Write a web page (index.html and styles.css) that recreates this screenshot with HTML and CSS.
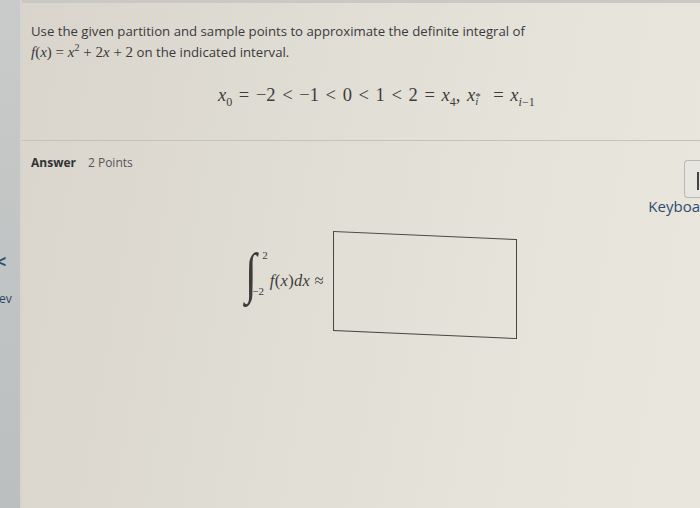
FILE: index.html
```html
<!DOCTYPE html>
<html>
<head>
<meta charset="utf-8">
<link rel="stylesheet" href="styles.css">
</head>
<body>
<div class="page">
  <aside class="sidebar">
    <span class="back">&lt;</span>
    <span class="prev">ev</span>
  </aside>
  <main class="main">
    <section class="question">
      <p class="prompt">Use the given partition and sample points to approximate the definite integral of<br><span class="math"><i>f</i>(<i>x</i>) = <i>x</i><sup>2</sup> + 2<i>x</i> + 2</span> on the indicated interval.</p>
      <p class="formula"><i>x</i><sub>0</sub> = −2 &lt; −1 &lt; 0 &lt; 1 &lt; 2 = <i>x</i><sub>4</sub>, <i>x</i><span class="supsub"><sup>*</sup><sub><i>i</i></sub></span> = <i>x</i><sub><i>i</i>−1</sub></p>
    </section>
    <section class="answer">
      <div class="answer-head">
        <span class="label">Answer</span>
        <span class="points">2 Points</span>
        <span class="tool-btn"><span class="bar"></span></span>
      </div>
      <div class="keyboard">Keyboa</div>
      <div class="work">
        <div class="integral">
          <span class="int-sign">∫</span>
          <span class="limits"><span class="upper">2</span><span class="lower">−2</span></span>
          <span class="integrand"><i>f</i>(<i>x</i>)<i>dx</i> ≈</span>
        </div>
        <div class="answer-box"></div>
      </div>
    </section>
  </main>
</div>
</body>
</html>
```

FILE: styles.css
```css
html, body {
  margin: 0;
  padding: 0;
}
body {
  width: 700px;
  height: 508px;
  overflow: hidden;
  font-family: "Open Sans", "Liberation Sans", sans-serif;
  background: #dcd9d2;
}
.page {
  display: flex;
  height: 508px;
}
.sidebar {
  width: 22px;
  flex: none;
  background: linear-gradient(180deg, #c9cbca 0%, #c0c3c3 60%, #bcbfbf 100%);
  border-right: 2px solid #d4d4d0;
  display: flex;
  flex-direction: column;
  color: #2c4662;
  font-size: 12px;
  padding-top: 252px;
  box-sizing: border-box;
  overflow: hidden;
}
.back {
  margin-left: -4px;
  font-size: 18px;
  font-weight: 700;
  line-height: 18px;
  color: #35506c;
}
.prev {
  margin-top: 22px;
  margin-left: -1px;
  line-height: 14px;
}
.main {
  flex: 1;
  border-top: 3px solid #c9c8c4;
  background: linear-gradient(100deg, #d9d5cd 0%, #e0ddd5 40%, #e6e3db 70%, #e9e6de 100%);
}
.question {
  padding: 18px 0 0 9px;
  height: 138px;
  box-sizing: border-box;
  border-bottom: 1px solid #c4c2bc;
}
.prompt {
  margin: 0;
  font-size: 13.2px;
  line-height: 21px;
  color: #3a3a3a;
}
.math {
  font-family: "Liberation Serif", serif;
  font-size: 15px;
}
.math sup {
  font-size: 10px;
  line-height: 0;
}
.formula {
  margin: 22px 0 0 187px;
  font-family: "Liberation Serif", serif;
  font-size: 18.5px;
  line-height: 20px;
  color: #3c3c3c;
  word-spacing: 2px;
}
.formula sub {
  font-size: 12px;
  line-height: 0;
}
.supsub {
  display: inline-flex;
  flex-direction: column;
  vertical-align: middle;
  font-size: 11px;
  line-height: 9px;
  margin-right: 6px;
}
.supsub sup, .supsub sub {
  vertical-align: baseline;
  font-size: 11px;
}
.answer {
  padding: 13px 0 0 9px;
}
.answer-head {
  display: flex;
  align-items: flex-start;
  gap: 12px;
  font-size: 12px;
  line-height: 18px;
}
.label {
  font-weight: 700;
  color: #333;
}
.points {
  color: #555;
}
.tool-btn {
  margin-left: auto;
  margin-top: 6px;
  width: 22px;
  height: 36px;
  border: 1px solid #b8b8b4;
  border-right: none;
  border-radius: 4px 0 0 4px;
  background: #e8e6e0;
  position: relative;
  margin-right: -7px;
}
.bar {
  position: absolute;
  left: 12px;
  top: 11px;
  width: 2px;
  height: 18px;
  background: #444;
}
.keyboard {
  text-align: right;
  margin-top: -2px;
  margin-right: 0;
  font-size: 15px;
  color: #2e4c6e;
  line-height: 20px;
  white-space: nowrap;
}
.work {
  display: flex;
  align-items: flex-start;
  margin-top: 15px;
  margin-left: 212px;
}
.integral {
  display: flex;
  align-items: flex-start;
  margin-top: 14px;
  font-family: "Liberation Serif", serif;
  font-size: 16px;
  color: #3c3c3c;
}
.int-sign {
  font-size: 56px;
  line-height: 56px;
  display: inline-block;
  transform: scaleX(0.75);
}
.limits {
  display: flex;
  flex-direction: column;
  justify-content: space-between;
  height: 48px;
  font-size: 11px;
  line-height: 12px;
  margin-left: -4px;
  margin-top: 4px;
}
.upper {
  margin-left: 8px;
}
.lower {
  margin-left: -2px;
}
.integrand {
  margin-top: 26px;
  margin-left: 2px;
  font-size: 16.5px;
  line-height: 20px;
  letter-spacing: 0.3px;
  white-space: nowrap;
}
.answer-box {
  margin-left: 9px;
  width: 182px;
  height: 98px;
  border: 1.5px solid #4a4644;
  transform: skewY(2.5deg);
  transform-origin: left top;
}
```
